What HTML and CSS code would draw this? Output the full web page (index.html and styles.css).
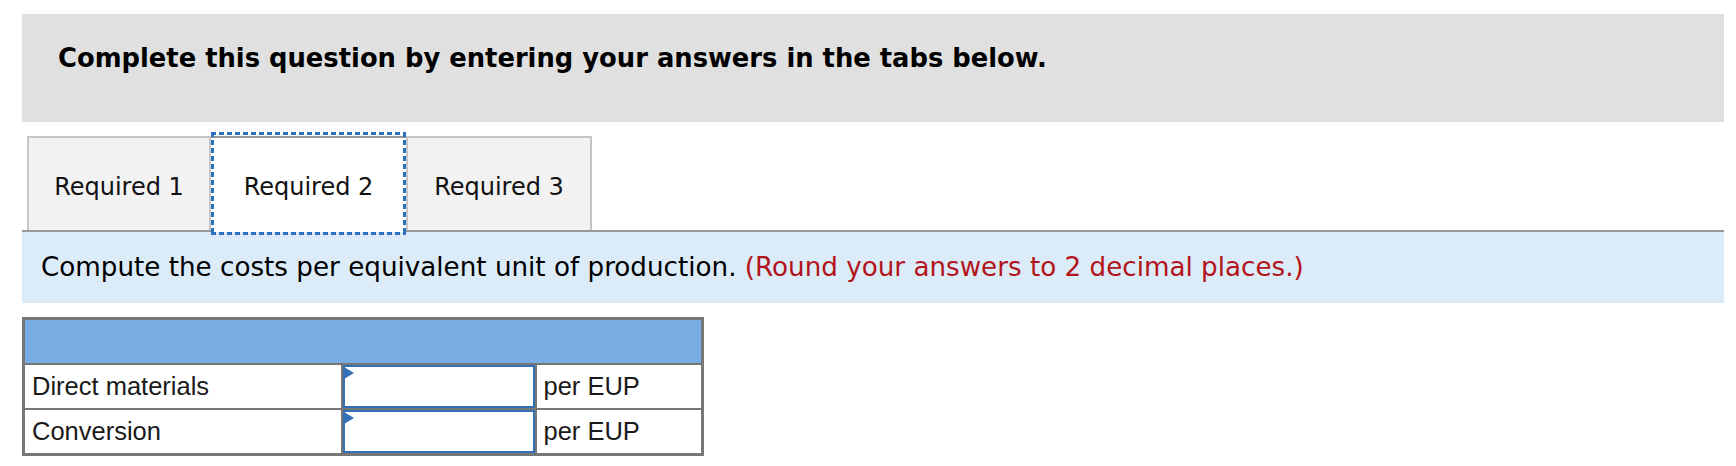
FILE: index.html
```html
<!DOCTYPE html>
<html lang="en">
<head>
<meta charset="utf-8">
<title>Required 2</title>
<link rel="stylesheet" href="styles.css">
</head>
<body>
<div class="page">
  <div class="banner">Complete this question by entering your answers in the tabs below.</div>

  <div class="tabs">
    <div class="tab tab-1">Required 1</div>
    <div class="tab tab-2 tab-active">Required 2</div>
    <div class="tab tab-3">Required 3</div>
  </div>

  <div class="instr">Compute the costs per equivalent unit of production. <span class="hint">(Round your answers to 2 decimal places.)</span></div>

  <table class="grid">
    <colgroup>
      <col class="c-label">
      <col class="c-input">
      <col class="c-unit">
    </colgroup>
    <tr class="head"><td colspan="3"></td></tr>
    <tr>
      <td class="label">Direct materials</td>
      <td class="cell-input"><div class="field"><input type="text" aria-label="Direct materials"><span class="flag"></span></div></td>
      <td class="unit">per EUP</td>
    </tr>
    <tr>
      <td class="label">Conversion</td>
      <td class="cell-input"><div class="field"><input type="text" aria-label="Conversion"><span class="flag"></span></div></td>
      <td class="unit">per EUP</td>
    </tr>
  </table>
</div>
</body>
</html>
```
FILE: styles.css
```css
html, body {
  margin: 0;
  padding: 0;
  background: #ffffff;
}

body {
  padding: 14px 12px 0 22px;
  font-family: "DejaVu Sans", Verdana, sans-serif;
  color: #000;
}

.banner {
  background: #e0e0e0;
  height: 108px;
  box-sizing: border-box;
  padding: 29px 36px 0 36px;
  font-weight: bold;
  font-size: 25.8px;
  line-height: 30px;
}

.tabs {
  display: flex;
  margin-top: 14px;
  padding-left: 5px;
  border-bottom: 2px solid #989898;
}

.tab {
  height: 94px;
  box-sizing: border-box;
  display: flex;
  align-items: center;
  justify-content: center;
  padding-top: 6px;
  background: #f2f2f2;
  border: 2px solid #c6c6c6;
  border-bottom: 0;
  font-size: 24px;
  color: #111;
}

.tab-1 { width: 184px; }
.tab-2 { width: 195px; }
.tab-3 { width: 186px; }

.tab-active {
  position: relative;
  z-index: 1;
  background: #ffffff;
  border-color: #9a9a9a;
  border-left: 0;
  border-right: 0;
  height: 96px;
  margin-bottom: -2px;
  padding-bottom: 2px;
}

.tab-active::after {
  content: "";
  position: absolute;
  top: -6px;
  bottom: -3px;
  left: 0;
  right: 0;
  pointer-events: none;
  background:
    repeating-linear-gradient(90deg, #2f6fbf 0 5px, transparent 5px 8px) left top / 100% 3px no-repeat,
    repeating-linear-gradient(90deg, #2f6fbf 0 5px, transparent 5px 8px) left bottom / 100% 3px no-repeat,
    repeating-linear-gradient(180deg, #2f6fbf 0 5px, transparent 5px 8px) left top / 3px 100% no-repeat,
    repeating-linear-gradient(180deg, #2f6fbf 0 5px, transparent 5px 8px) right top / 3px 100% no-repeat;
}

.instr {
  background: #dbebf8;
  height: 71px;
  box-sizing: border-box;
  padding: 20px 19px 0 19px;
  font-size: 26.2px;
  line-height: 31px;
  color: #000;
}

.hint {
  color: #b3141b;
}

.grid {
  margin-top: 14px;
  border-collapse: collapse;
  table-layout: fixed;
  width: 679px;
  border: 3px solid #777777;
  font-family: "Liberation Sans", Arial, sans-serif;
  font-size: 25.5px;
}

.c-label { width: 318px; }
.c-input { width: 194px; }
.c-unit { width: 167px; }

.grid td {
  border: 2px solid #777777;
  padding: 0;
  height: 43px;
}

.grid .head td {
  background: #78ade3;
  height: 43px;
}

.grid .label,
.grid .unit {
  padding: 0 7px;
  white-space: nowrap;
  color: #1a1a1a;
}

.grid .cell-input {
  padding: 0;
}

.field {
  position: relative;
}

.field input {
  display: block;
  width: 100%;
  height: 43px;
  box-sizing: border-box;
  margin: 0;
  border: 2px solid #3470b5;
  background: #ffffff;
  outline: none;
  font: inherit;
}

.flag {
  position: absolute;
  left: 1px;
  top: 2px;
  width: 0;
  height: 0;
  border-left: 10px solid #3470b5;
  border-top: 6px solid transparent;
  border-bottom: 6px solid transparent;
}
```
